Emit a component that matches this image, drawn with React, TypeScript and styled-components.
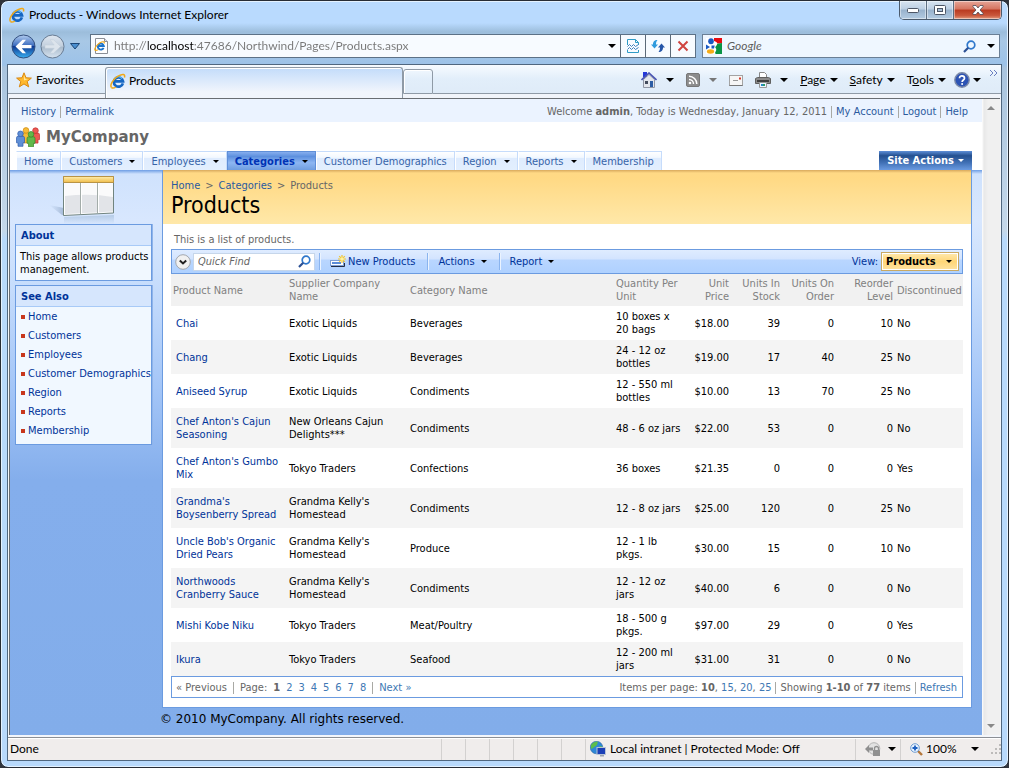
import React from "react";
import styled, { createGlobalStyle } from "styled-components";

const ui = `Lato, "Noto Sans", sans-serif`;
const tahoma = `"DejaVu Sans Condensed", "DejaVu Sans", sans-serif`;
const verdana = `"DejaVu Sans", sans-serif`;

const GlobalStyle = createGlobalStyle`
  * { box-sizing: border-box; }
  body { margin: 0; background: #30343c; font-family: ${tahoma}; font-size: 11px; line-height: 13px; color: #000; }
  button, input, select { font: inherit; color: inherit; margin: 0; padding: 0; border: 0; background: none; }
  a { text-decoration: none; color: inherit; }
  svg { display: block; flex: none; }
  h1, h2, p, ul { margin: 0; padding: 0; }
`;

/* ---------- browser frame ---------- */

const Shell = styled.div`
  min-height: 100vh;
  display: flex;
  flex-direction: column;
  padding: 0 6px 6px;
  border: 1px solid #272c35;
  border-radius: 8px;
  box-shadow: inset 0 0 0 1px #e4f2ff;
  background: linear-gradient(#b9dafe 0, #b9dafe 22px, #9cbddb 31px, #a8c8e6 40px, #9cc2e8 64px, #a9c4de 66px, #c5d8ea 230px, #b8d9fb 238px);
  font-family: ${ui};
  font-size: 12px;
  line-height: 16px;
`;

const TitleBar = styled.header`
  display: flex;
  align-items: flex-start;
  height: 33px;
`;

const WindowTitle = styled.div`
  flex: 1;
  display: flex;
  align-items: center;
  gap: 4px;
  padding: 6px 0 0 2px;
`;

const WindowButtons = styled.div`
  display: flex;
  height: 19px;
  border: 1px solid #4b5a6c;
  border-top: 0;
  border-radius: 0 0 5px 5px;
  overflow: hidden;
`;

const WindowButton = styled.button<{ $close?: boolean }>`
  width: ${p => (p.$close ? 47 : 27)}px;
  display: grid;
  place-items: center;
  border-right: ${p => (p.$close ? 0 : 1)}px solid #5d6e82;
  box-shadow: inset 0 0 0 1px rgba(255, 255, 255, 0.45);
  background: ${p =>
    p.$close
      ? "linear-gradient(#e6a597 0, #d5745f 45%, #b93a20 50%, #c9573b 80%, #e39a7c)"
      : "linear-gradient(#d8e4f1 0, #bccfe3 45%, #98b2cc 50%, #b3cbe2)"};
`;

const AddressRow = styled.div`
  display: flex;
  align-items: center;
  height: 24px;
  margin: 0 2px 6px 4px;
`;

const NavOrb = styled.button`
  display: grid;
  margin-right: 4px;
`;

const HistoryButton = styled.button`
  margin: 0 10px 0 1px;
`;

const AddressBox = styled.div`
  flex: 1;
  display: flex;
  align-items: center;
  height: 24px;
  padding-left: 3px;
  border: 1px solid #5c7186;
  background: #f7fbff;
`;

const UrlInput = styled.input`
  flex: 1;
  min-width: 0;
  margin-left: 5px;
  outline: 0;
  -webkit-text-fill-color: transparent;
  background: linear-gradient(90deg, #777 34px, #000 34px, #000 80px, #777 80px);
  -webkit-background-clip: text;
  background-clip: text;
`;

const BoxButton = styled.button<{ $line?: boolean; $narrow?: boolean }>`
  height: 22px;
  width: ${p => (p.$narrow ? 17 : 25)}px;
  display: grid;
  place-items: center;
  border-left: ${p => (p.$line ? 1 : 0)}px solid #5c6a78;
`;

const SearchBox = styled.div`
  width: 298px;
  height: 24px;
  margin-left: 6px;
  display: flex;
  align-items: center;
  padding-left: 3px;
  border: 1px solid #6a7f95;
  background: #eff7ff;
`;

const SearchInput = styled.input`
  flex: 1;
  min-width: 0;
  margin-left: 5px;
  outline: 0;
  font-style: italic;
  &::placeholder { color: #5c5c5c; opacity: 1; }
`;

const Client = styled.div`
  flex: 1;
  display: flex;
  flex-direction: column;
  border: 1px solid #50677f;
  background: #f3f6fb;
`;

const CommandRow = styled.div`
  display: flex;
  align-items: flex-start;
  height: 33px;
  padding-top: 2px;
  background: linear-gradient(#f7fbff 0, #e2eefa 14px, #dfebf8 28px, #f1f4fa 29px);
`;

const Favorites = styled.button`
  width: 97px;
  height: 27px;
  padding-left: 8px;
  display: flex;
  align-items: center;
  gap: 4px;
  border-bottom: 1px solid #8f9aa6;
`;

const BrowserTab = styled.a`
  width: 298px;
  height: 31px;
  padding: 0 0 4px 4px;
  display: flex;
  align-items: center;
  gap: 3px;
  border: 1px solid #8f9aa6;
  border-bottom: 0;
  border-radius: 3px 3px 0 0;
  box-shadow: inset 1px 1px 0 #fff;
  background: linear-gradient(#c3dcfa, #f1f5fc 80%);
`;

const NewTab = styled.button`
  width: 30px;
  height: 25px;
  margin-top: 2px;
  border: 1px solid #8f9aa6;
  border-radius: 3px 3px 0 0;
  box-shadow: inset 1px 1px 0 #fff;
`;

const Commands = styled.div`
  flex: 1;
  display: flex;
  align-items: center;
  justify-content: flex-end;
  height: 27px;
  padding-right: 3px;
  border-bottom: 1px solid #8f9aa6;
`;

const Command = styled.button<{ $icon?: boolean; $close?: boolean }>`
  display: flex;
  align-items: center;
  gap: ${p => (p.$icon ? 9 : p.$close ? 3 : 4)}px;
  margin-left: ${p => (p.$close ? 8 : 12)}px;
`;

const Viewport = styled.div`
  flex: 1;
  display: flex;
  margin: 0 1px 2px;
  border-top: 1px solid #696d72;
  border-left: 1px solid #696d72;
`;

const Scrollbar = styled.div`
  width: 18px;
  display: flex;
  flex-direction: column;
  justify-content: space-between;
  align-items: center;
  padding: 7px 0;
  background: linear-gradient(90deg, #fff 0, #e8e8e8 2px, #f0f0f0 6px, #f0f0f0);
`;

const StatusBar = styled.footer`
  display: flex;
  align-items: center;
  height: 23px;
  padding-left: 2px;
  border-top: 1px solid #8b8f95;
  box-shadow: inset 0 1px 0 #fff;
  background: #f0edec;
`;

const StatusText = styled.span`
  flex: 1;
`;

const StatusCell = styled.span<{ $w: number }>`
  width: ${p => p.$w}px;
  height: 21px;
  display: flex;
  align-items: center;
  gap: 4px;
  padding-left: 4px;
  border-left: 1px solid #d3d1d0;
  white-space: nowrap;
`;

const StatusMenu = styled.button<{ $w: number; $end?: number }>`
  width: ${p => p.$w}px;
  height: 21px;
  display: flex;
  align-items: center;
  gap: 3px;
  padding: 0 ${p => p.$end ?? 4}px 0 9px;
  border-left: 1px solid #d3d1d0;
  & > :last-child { margin-left: auto; }
`;

/* ---------- site ---------- */

const Site = styled.div`
  flex: 1;
  min-width: 0;
  display: flex;
  flex-direction: column;
  background: #fff;
  color: #666;
  font-family: ${tahoma};
  font-size: 11px;
  line-height: 13px;
`;

const TopLinks = styled.div`
  display: flex;
  justify-content: space-between;
  align-items: center;
  height: 23px;
  padding: 1px 14px 0 11px;
  background: #ebf3ff;
`;

const LinkRow = styled.div`
  display: flex;
  gap: 4px;
`;

const Bar = styled.span`
  width: 1px;
  height: 12px;
  margin-top: 1px;
  background: #a9a9a4;
`;

const SiteLink = styled.a`
  color: #2b5a9e;
`;

const Brand = styled.div`
  display: flex;
  align-items: center;
  gap: 6px;
  height: 29px;
  padding-left: 6px;
  font: bold 15px/20px ${verdana};
  color: #666;
`;

const MainNav = styled.nav`
  display: flex;
  height: 19px;
  padding: 0 10px 0 6px;
`;

const NavItem = styled.a<{ $active?: boolean }>`
  display: flex;
  align-items: center;
  gap: 7px;
  padding: 0 7px;
  border: 1px solid ${p => (p.$active ? "#5f8fd8" : "#c6dcfb")};
  border-bottom: 0;
  border-left-color: ${p => (p.$active ? "#5f8fd8" : "#fff")};
  white-space: nowrap;
  color: ${p => (p.$active ? "#0033b5" : "#3764a8")};
  font-weight: ${p => (p.$active ? "bold" : "normal")};
  background: ${p =>
    p.$active
      ? "linear-gradient(#86aeee, #5d90de 25%, #8db6f2 60%, #6f9de0)"
      : "linear-gradient(#fff, #f2f8ff 30%, #dfecfe 35%, #e3effe)"};
`;

const SiteActions = styled.button`
  margin-left: auto;
  display: flex;
  align-items: center;
  gap: 4px;
  padding: 0 8px;
  color: #fff;
  font-weight: bold;
  background: linear-gradient(#5e8fd8 0, #24508f 25%, #3f6fb4 60%, #6a9ae0);
`;

const Body = styled.div`
  flex: 1;
  display: grid;
  grid-template-columns: 152px minmax(0, 1fr);
  padding-right: 10px;
  align-content: start;
  background: linear-gradient(#6d9de4 0, #cfe2fd 4px, #d8e7fe 50px, #cbe0fd 100px, #a3c5f7 220px, #84aeec 310px, #82adea);
`;

const Sidebar = styled.aside`
  padding: 5px 10px 0 5px;
`;

const Artwork = styled.div`
  display: flex;
  justify-content: center;
  height: 49px;
  padding-right: 1px;
`;

const SideBox = styled.section`
  margin-bottom: 4px;
  border: 1px solid #6b9be0;
  box-shadow: 1px 0 0 #8fb4ea;
  background: #f1f8ff;
  color: #000;
`;

const SideTitle = styled.h2`
  padding: 4px 5px;
  height: 21px;
  font-size: 11px;
  line-height: 13px;
  color: #003399;
  border-bottom: 1px solid #a8caf7;
  background: #d6e6fd;
`;

const SideText = styled.p`
  padding: 4px 0 4px 4px;
`;

const SideList = styled.ul`
  list-style: none;
  padding: 0 0 4px 5px;
`;

const SideItem = styled.li`
  display: flex;
  align-items: center;
  gap: 3px;
  height: 19px;
  white-space: nowrap;
  color: #003399;
  &::before { content: ""; flex: none; width: 4px; height: 4px; background: #c8371c; }
`;

const Panel = styled.main`
  border: 1px solid #6b9be0;
  border-top: 0;
  background: #fff;
  padding-bottom: 9px;
`;

const Banner = styled.div`
  padding: 9px 8px 0;
  height: 54px;
  background: linear-gradient(#d8a95d 0, #ffd985 3px, #ffd984 8px, #ffe8a9);
`;

const Crumbs = styled.div`
  display: flex;
  gap: 5px;
`;

const PageTitle = styled.h1`
  color: #000;
  font-weight: normal;
  font-size: 23px;
  line-height: 26px;
`;

const Intro = styled.p`
  padding: 9px 11px 3px;
`;

const Grid = styled.div`
  margin: 0 8px;
`;

const Toolbar = styled.div`
  display: flex;
  align-items: center;
  height: 25px;
  padding: 0 3px;
  border: 1px solid #6b9be0;
  background: linear-gradient(#dfecff 0, #d3e4ff 9px, #b9d6ff 10px, #afd1ff);
  color: #003399;
`;

const QuickFind = styled.label`
  display: flex;
  align-items: center;
  width: 122px;
  height: 18px;
  margin: 0 4px 0 2px;
  padding: 0 3px 0 4px;
  border: 1px solid #c6d6ea;
  background: #fff;
`;

const QuickInput = styled.input`
  flex: 1;
  min-width: 0;
  outline: 0;
  font-style: italic;
  &::placeholder { color: #666; opacity: 1; }
`;

const ToolButton = styled.button<{ $icon?: boolean }>`
  display: flex;
  align-items: center;
  gap: ${p => (p.$icon ? 2 : 6)}px;
  height: 17px;
  padding: 0 12px 0 10px;
  border-left: 1px solid #8ab4ee;
  box-shadow: inset 1px 0 0 #eaf3ff;
  white-space: nowrap;
`;

const ViewPicker = styled.label`
  position: relative;
  display: flex;
  align-items: center;
  gap: 3px;
  margin-left: auto;
  white-space: nowrap;
`;

const ViewSelect = styled.select`
  width: 78px;
  height: 19px;
  padding-left: 4px;
  appearance: none;
  border: 1px solid #c9a962;
  box-shadow: inset 0 0 0 1px #fff;
  background: linear-gradient(#ffe9ae, #ffd677 50%, #ffe3a0);
  color: #000;
  font-weight: bold;
`;

const SelectCaret = styled.span`
  position: absolute;
  right: 7px;
  top: 8px;
  pointer-events: none;
`;

const Table = styled.table`
  width: 100%;
  table-layout: fixed;
  border-collapse: collapse;
  color: #000;
`;

const Head = styled.th<{ $right?: boolean }>`
  padding: 3px 2px;
  font-weight: normal;
  color: #808080;
  text-align: ${p => (p.$right ? "right" : "left")};
  white-space: pre;
  background: #f1f1f1;
`;

const Row = styled.tr`
  &:nth-child(even) { background: #f4f4f4; }
`;

const Cell = styled.td<{ $right?: boolean; $name?: boolean }>`
  padding: ${p => (p.$name ? "7px 5px" : "4px 2px")};
  text-align: ${p => (p.$right ? "right" : "left")};
  white-space: pre;
  color: ${p => (p.$name ? "#003399" : "#000")};
`;

const Pager = styled.div`
  display: flex;
  justify-content: space-between;
  align-items: center;
  height: 22px;
  padding: 0 5px 0 4px;
  border: 1px solid #6b9be0;
  white-space: pre;
`;

const Pages = styled.div`
  display: flex;
  gap: 6px;
`;

const PageLink = styled.a`
  color: #4078b4;
`;

const Copyright = styled.div`
  grid-column: 1 / -1;
  padding: 5px 0 8px 150px;
  font: 12px/13px ${verdana};
  color: #000;
`;

/* ---------- icons ---------- */

const Caret = ({ w = 6, color = "#000" }: { w?: number; color?: string }) => (
  <svg width={w} height={w / 2} viewBox="0 0 6 3"><path d="M0 0h6L3 3z" fill={color} /></svg>
);

const HistoryCaret = () => (
  <svg width="10" height="7" viewBox="0 0 10 7"><path d="M.5.5h9L5 6z" fill="#4a8fd0" stroke="#1b4676" /></svg>
);

const IeLogo = () => (
  <svg width="16" height="16" viewBox="0 0 16 16" fill="none">
    <path d="M12.9 10.3A4.6 4.6 0 1 1 13 8.3H4.6" stroke="#1666c2" strokeWidth="2.7" />
    <path d="M4.4 6.2A4.4 4.4 0 0 1 12 5.6" stroke="#58b8f4" strokeWidth="1.3" />
    <path d="M1.6 14.6C-.6 12.5 3 6 8 3.2s7.5-2 6.4 1.3" stroke="#f0a818" strokeWidth="1.5" />
    <path d="M1.6 14.6c1 .8 2.800.3 4.200-.5" stroke="#f0a818" strokeWidth="1.4" />
  </svg>
);

const BackOrb = () => (
  <svg width="25" height="25" viewBox="0 0 25 25">
    <defs>
      <linearGradient id="orb" x1="0" y1="0" x2="0" y2="1">
        <stop offset="0" stopColor="#b3cdf0" /><stop offset=".45" stopColor="#3f6fc0" />
        <stop offset=".5" stopColor="#0f3a92" /><stop offset="1" stopColor="#39b0f2" />
      </linearGradient>
    </defs>
    <circle cx="12.5" cy="12.5" r="11.5" fill="url(#orb)" stroke="#34507e" />
    <path d="M4.500 12.500l7-6.800h3.500L10.800 11H20.500v3.200h-9.700l4.200 5h-3.500z" fill="#fff" />
  </svg>
);

const ForwardOrb = () => (
  <svg width="25" height="25" viewBox="0 0 25 25">
    <defs>
      <linearGradient id="orb2" x1="0" y1="0" x2="0" y2="1">
        <stop offset="0" stopColor="#dfe7f0" /><stop offset=".48" stopColor="#c3d0de" /><stop offset=".52" stopColor="#a9bacb" /><stop offset="1" stopColor="#d8e4f0" />
      </linearGradient>
    </defs>
    <circle cx="12.5" cy="12.5" r="11.5" fill="url(#orb2)" stroke="#677b93" />
    <path d="M20.500 12.500l-7-6.800H10l4.200 5.300H5v3.200h9.200l-4.200 5h3.500z" fill="#dce4ec" stroke="#c3cfdb" strokeWidth=".5" />
  </svg>
);

const PageIe = () => (
  <svg width="15" height="16" viewBox="0 0 15 16">
    <path d="M1.500.5h9l3 3v12h-12z" fill="#fff" stroke="#8a8f96" /><path d="M10.500.5v3h3" fill="#dde" stroke="#8a8f96" />
    <path d="M9.600 9.800A3 3 0 1 1 9.800 8H3.500" fill="none" stroke="#1c74cc" strokeWidth="1.9" />
    <path d="M1 12C0 10.500 3 6.500 6 4.800s5-1.300 4 .7M1 12c.6.700 2 .2 3-.3" fill="none" stroke="#f0a818" strokeWidth="1.2" />
  </svg>
);

const BrokenPage = () => (
  <svg width="12" height="14" viewBox="0 0 12 14" fill="none" stroke="#2f9bc6">
    <path d="M.5 6V.5h8l3 3V6M8.500.5v3h3M.5 11v2.500h11V11" />
    <path d="M.5 7.500l2-2 2 2 2-2 2 2 3-2M.5 10.500l2-2 2 2 2-2 2 2 3-2" stroke="#3c7fbd" />
  </svg>
);

const Refresh = () => (
  <svg width="14" height="14" viewBox="0 0 14 14">
    <path d="M0 5.500L3.500 9.500 7 5.500H5c0-2 .4-3.300 1.500-4.500C3.200 1 2 3 2 5.500z" fill="#2f9bdd" />
    <path d="M14 8.500l-3.500-4L7 8.500h2c0 2-.4 3.300-1.500 4.500 3.300 0 4.500-2 4.500-4.500z" fill="#2556a8" />
  </svg>
);

const Stop = () => (
  <svg width="12" height="12" viewBox="0 0 12 12"><path d="M1.500 1.500l9 9M10.500 1.500l-9 9" stroke="#cf4440" strokeWidth="2" /></svg>
);

const GoogleMark = () => (
  <svg width="16" height="16" viewBox="0 0 16 16">
    <path d="M0 0h16v16H0z" fill="#fff" />
    <path d="M8 0h8v5.500h-4.500L8 3z" fill="#e60c10" /><path d="M10 6l6-1v11H9.500L8 10z" fill="#0a9445" />
    <path d="M8 3.500c3 0 4 2 2.500 4S9 9 10 10.500 9 15 7.500 16H6V3.500z" fill="#fff" />
    <ellipse cx="5" cy="3.3" rx="2.8" ry="3" fill="#1959c2" />
    <path d="M0 6.500l4 2.500-4 2.500z" fill="#1959c2" /><path d="M5.500 7.500h3.200l-.7 3H5.500z" fill="#1959c2" />
    <ellipse cx="4.5" cy="13.5" rx="3.6" ry="2.2" fill="#f5ac18" />
  </svg>
);

const Magnifier = () => (
  <svg width="13" height="13" viewBox="0 0 13 13" fill="none">
    <circle cx="8" cy="5" r="3.8" stroke="#2f78cc" strokeWidth="1.7" /><path d="M5.200 7.800L1 12" stroke="#2a4f94" strokeWidth="2.2" />
  </svg>
);

const Star = () => (
  <svg width="16" height="16" viewBox="0 0 16 16">
    <path d="M8 .8l2 5 5.400.3-4.200 3.400 1.500 5.400L8 11.900l-4.700 3 1.500-5.400L.6 6.100 6 5.800z" fill="#ffb92e" stroke="#d98812" />
    <path d="M8 3l1.200 3.800 3 .3L8 8.500z" fill="#ffe79a" />
  </svg>
);

const House = () => (
  <svg width="16" height="16" viewBox="0 0 16 16">
    <path d="M2 0h4v5H2z" fill="#2438d8" /><path d="M2.500 7.500L8 2.500l5.500 5v8h-11z" fill="#e3e6ec" stroke="#9096a4" />
    <path d="M.5 8L8 1l7.500 7" fill="none" stroke="#4a55b4" strokeWidth="1.6" />
    <path d="M4 9h3v3H4z" fill="#444c5c" /><path d="M9 9h3v6H9z" fill="#2c5ca4" />
  </svg>
);

const Feed = () => (
  <svg width="14" height="14" viewBox="0 0 14 14" fill="none">
    <rect x=".5" y=".5" width="13" height="13" rx="1.5" fill="#8c8c8c" stroke="#777" />
    <circle cx="4" cy="10" r="1.3" fill="#fff" />
    <path d="M3 6.500a4.500 4.500 0 0 1 4.500 4.500M3 3.200A7.800 7.800 0 0 1 10.800 11" stroke="#fff" strokeWidth="1.5" />
  </svg>
);

const Mail = () => (
  <svg width="14" height="11" viewBox="0 0 14 11">
    <rect x=".5" y=".5" width="13" height="10" fill="#f6f6f6" stroke="#a3a3a3" />
    <path d="M10 2.500h2v2h-2z" fill="#d63a2a" /><path d="M4 5.500h5" stroke="#999" /><path d="M.5 10.500h13" stroke="#777" />
  </svg>
);

const Printer = () => (
  <svg width="16" height="16" viewBox="0 0 16 16">
    <path d="M4.500.5h5l2 2V6h-7z" fill="#fff" stroke="#888" />
    <path d="M.5 6.500l2-1h11l2 1v5H.5z" fill="#8b8b8b" stroke="#606060" /><path d="M2 8h12v2H2z" fill="#3f3f3f" />
    <path d="M4.500 10.500h7v5h-7z" fill="#eef6ff" stroke="#999" /><path d="M6 12h2v2H6z" fill="#2489c9" /><path d="M8 12h2v2H8z" fill="#2a9c68" />
  </svg>
);

const HelpIcon = () => (
  <svg width="16" height="16" viewBox="0 0 16 16" fill="none">
    <circle cx="8" cy="8" r="7.2" fill="#2c53b4" stroke="#7c8aa8" strokeWidth="1.4" />
    <path d="M5.500 6.200c0-3.200 5-3 5 0 0 1.800-2.400 1.800-2.400 3.800" stroke="#fff" strokeWidth="1.7" /><circle cx="8.1" cy="12" r="1" fill="#fff" />
  </svg>
);

const Minimize = () => (
  <svg width="12" height="5" viewBox="0 0 12 5"><rect x=".5" y=".5" width="11" height="4" rx="1" fill="#fff" stroke="#4d5666" /></svg>
);
const Maximize = () => (
  <svg width="12" height="10" viewBox="0 0 12 10"><rect x=".5" y=".5" width="11" height="9" rx="1" fill="#fff" stroke="#4d5666" /><rect x="3.5" y="3.5" width="5" height="3" fill="#a9bfd6" stroke="#4d5666" /></svg>
);
const CloseX = () => (
  <svg width="12" height="10" viewBox="0 0 12 10"><path d="M1 .5h3l2 2.500L8 .5h3v1.200L8 5l3 3.300v1.200H8L6 7 4 9.500H1V8.300L4 5 1 1.700z" fill="#fff" stroke="#4f4a55" strokeWidth=".8" /></svg>
);

const person = (x: number, y: number, fill: string, dark: string) => (
  <g key={fill} fill={fill} stroke={dark} strokeWidth=".7">
    <path d={`M${x} ${y + 7}q0-1.500 1.500-1.500h5q1.500 0 1.500 1.500v5h-1.500v3.500h-5v-3.500H${x}z`} />
    <circle cx={x + 4} cy={y + 3} r="2.8" />
  </g>
);
const People = () => (
  <svg width="24" height="20" viewBox="0 0 24 20">
    {person(6, 0.4, "#f6bb36", "#cf8a10")}
    {person(15.5, 0.6, "#ec5852", "#c22f30")}
    {person(0.5, 3.8, "#5f8fd6", "#2f5cae")}
    {person(11, 4.3, "#63b84a", "#348828")}
  </svg>
);

const GridArt = () => (
  <svg width="68" height="49" viewBox="0 0 68 49">
    <defs>
      <linearGradient id="gold" x1="0" y1="0" x2="0" y2="1"><stop offset="0" stopColor="#ffefae" /><stop offset="1" stopColor="#efbb48" /></linearGradient>
      <linearGradient id="fade" x1="0" y1="0" x2="0" y2="1"><stop offset="0" stopColor="#b5cbe6" /><stop offset="1" stopColor="#b5cbe6" stopOpacity="0" /></linearGradient>
      <linearGradient id="slant" x1="0" y1="0" x2="1" y2="0"><stop offset="0" stopColor="#b3c8e4" stopOpacity="0" /><stop offset="1" stopColor="#a3b8d6" /></linearGradient>
    </defs>
    <path d="M0 30l15 3v7H13z" fill="url(#slant)" />
    <path d="M15 42l50-2v9H15z" fill="url(#fade)" />
    <path d="M14.500 1.500h50V38l-50 2.500z" fill="#fafafb" stroke="#71847f" />
    <path d="M16 21q25-3 48 1v14.500L16 39z" fill="#e2e4e8" />
    <path d="M14.500 1.500h50v6h-50z" fill="url(#gold)" stroke="#b99344" />
    <path d="M31.500 8v31M48.500 8v30" stroke="#a3aca9" /><path d="M32.500 8v31M49.500 8v30M15.500 8v31.500" stroke="#fff" />
  </svg>
);

const Chevron = () => (
  <svg width="16" height="16" viewBox="0 0 16 16" fill="none">
    <circle cx="8" cy="8" r="7.3" fill="#f1f1f1" stroke="#a3a7ad" /><path d="M4.800 6.500L8 9.500l3.200-3" stroke="#222" strokeWidth="2" />
  </svg>
);

const NewRecord = () => (
  <svg width="16" height="13" viewBox="0 0 16 13">
    <rect x=".5" y="5.5" width="13" height="5" fill="#fff" stroke="#7f9fd4" /><path d="M2 7h9v2H2z" fill="#5c8cd8" /><path d="M1 11.500h13.500V8" stroke="#222c44" fill="none" />
    <path d="M12 0v8M8 4h8M9.200 1.200l5.600 5.600M14.800 1.200L9.200 6.800" stroke="#f4c52a" strokeWidth="1.2" /><circle cx="12" cy="4" r="1.8" fill="#fff2a0" />
  </svg>
);

const Globe = () => (
  <svg width="16" height="16" viewBox="0 0 16 16">
    <circle cx="6.5" cy="6.5" r="6.3" fill="#2f87d6" stroke="#2a5f95" strokeWidth=".5" />
    <path d="M1 4c3-4 6-3 7-3.500L7 4 3 7 1 8zM7 8l3-3 3 1-3 6-3 0z" fill="#5ebd4a" />
    <rect x="7" y="6.5" width="8.5" height="7" fill="#1b3fb6" stroke="#b9c4d4" /><path d="M10 14h4v1.500h-4z" fill="#9aa3b0" />
  </svg>
);

const PrivacyIcon = () => (
  <svg width="16" height="15" viewBox="0 0 16 15" fill="none">
    <circle cx="9" cy="6.5" r="5.8" fill="#e2e2e2" stroke="#b4b4b4" /><path d="M0 7l4-4v2.500h4v3H4V11z" fill="#8f8f8f" />
    <rect x="8" y="8" width="7" height="6" fill="#909090" /><path d="M9.500 8V6.500a2 2 0 0 1 4 0V8" stroke="#909090" strokeWidth="1.3" />
  </svg>
);

const ZoomIcon = () => (
  <svg width="13" height="13" viewBox="0 0 13 13" fill="none">
    <path d="M8 8l4 4" stroke="#b4763a" strokeWidth="2.4" /><circle cx="5" cy="5" r="4.3" fill="#e9f4ff" stroke="#6f9cd0" /><path d="M5 2.500v5M2.500 5h5" stroke="#1d60c0" strokeWidth="1.8" />
  </svg>
);

const Grip = () => (
  <svg width="10" height="10" viewBox="0 0 10 10" fill="#bdbbba"><path d="M8 0h2v2H8zM4 4h2v2H4zM8 4h2v2H8zM0 8h2v2H0zM4 8h2v2H4zM8 8h2v2H8z" /></svg>
);

/* ---------- data ---------- */

const navItems = [
  { label: "Home" }, { label: "Customers", menu: true }, { label: "Employees", menu: true },
  { label: "Categories", menu: true, active: true }, { label: "Customer Demographics" },
  { label: "Region", menu: true }, { label: "Reports", menu: true }, { label: "Membership" },
];

const seeAlso = ["Home", "Customers", "Employees", "Customer Demographics", "Region", "Reports", "Membership"];

const columns = [
  { label: "Product Name", w: 116 }, { label: "Supplier Company\nName", w: 121 }, { label: "Category Name" },
  { label: "Quantity Per\nUnit", w: 71 }, { label: "Unit\nPrice", w: 46, right: true }, { label: "Units In\nStock", w: 51, right: true },
  { label: "Units On\nOrder", w: 54, right: true }, { label: "Reorder\nLevel", w: 59, right: true }, { label: "Discontinued", w: 68 },
];

const rows: string[][] = [
  ["Chai", "Exotic Liquids", "Beverages", "10 boxes x\n20 bags", "$18.00", "39", "0", "10", "No"],
  ["Chang", "Exotic Liquids", "Beverages", "24 - 12 oz\nbottles", "$19.00", "17", "40", "25", "No"],
  ["Aniseed Syrup", "Exotic Liquids", "Condiments", "12 - 550 ml\nbottles", "$10.00", "13", "70", "25", "No"],
  ["Chef Anton's Cajun\nSeasoning", "New Orleans Cajun\nDelights***", "Condiments", "48 - 6 oz jars", "$22.00", "53", "0", "0", "No"],
  ["Chef Anton's Gumbo\nMix", "Tokyo Traders", "Confections", "36 boxes", "$21.35", "0", "0", "0", "Yes"],
  ["Grandma's\nBoysenberry Spread", "Grandma Kelly's\nHomestead", "Condiments", "12 - 8 oz jars", "$25.00", "120", "0", "25", "No"],
  ["Uncle Bob's Organic\nDried Pears", "Grandma Kelly's\nHomestead", "Produce", "12 - 1 lb\npkgs.", "$30.00", "15", "0", "10", "No"],
  ["Northwoods\nCranberry Sauce", "Grandma Kelly's\nHomestead", "Condiments", "12 - 12 oz\njars", "$40.00", "6", "0", "0", "No"],
  ["Mishi Kobe Niku", "Tokyo Traders", "Meat/Poultry", "18 - 500 g\npkgs.", "$97.00", "29", "0", "0", "Yes"],
  ["Ikura", "Tokyo Traders", "Seafood", "12 - 200 ml\njars", "$31.00", "31", "0", "0", "No"],
];

export default function App() {
  return (
    <>
      <GlobalStyle />
      <Shell>
        <TitleBar>
          <WindowTitle><IeLogo />Products - Windows Internet Explorer</WindowTitle>
          <WindowButtons>
            <WindowButton aria-label="Minimize"><Minimize /></WindowButton>
            <WindowButton aria-label="Maximize"><Maximize /></WindowButton>
            <WindowButton $close aria-label="Close"><CloseX /></WindowButton>
          </WindowButtons>
        </TitleBar>

        <AddressRow>
          <NavOrb aria-label="Back"><BackOrb /></NavOrb>
          <NavOrb aria-label="Forward"><ForwardOrb /></NavOrb>
          <HistoryButton aria-label="Recent pages"><HistoryCaret /></HistoryButton>
          <AddressBox>
            <PageIe />
            <UrlInput aria-label="Address" defaultValue="http://localhost:47686/Northwind/Pages/Products.aspx" />
            <BoxButton $narrow aria-label="Show addresses"><Caret w={8} /></BoxButton>
            <BoxButton $line aria-label="Compatibility view"><BrokenPage /></BoxButton>
            <BoxButton $line aria-label="Refresh"><Refresh /></BoxButton>
            <BoxButton $line aria-label="Stop"><Stop /></BoxButton>
          </AddressBox>
          <SearchBox>
            <GoogleMark />
            <SearchInput aria-label="Search" placeholder="Google" />
            <BoxButton aria-label="Search the web"><Magnifier /></BoxButton>
            <BoxButton $narrow aria-label="Search options"><Caret w={8} /></BoxButton>
          </SearchBox>
        </AddressRow>

        <Client>
          <CommandRow>
            <Favorites><Star />Favorites</Favorites>
            <BrowserTab href="#"><IeLogo />Products</BrowserTab>
            <NewTab aria-label="New tab" />
            <Commands>
              <Command $icon aria-label="Home page"><House /><Caret w={8} /></Command>
              <Command $icon aria-label="Feeds"><Feed /><Caret w={8} color="#777" /></Command>
              <Command aria-label="Mail"><Mail /></Command>
              <Command $icon aria-label="Print"><Printer /><Caret w={8} /></Command>
              <Command><span><u>P</u>age</span><Caret w={8} /></Command>
              <Command><span><u>S</u>afety</span><Caret w={8} /></Command>
              <Command><span>T<u>o</u>ols</span><Caret w={8} /></Command>
              <Command $close aria-label="Help"><HelpIcon /><Caret w={8} /></Command>
              <Command $close aria-label="More commands">
                <svg width="9" height="22" viewBox="0 0 9 22" fill="none" stroke="#6a7fc0"><path d="M1 1l3 3-3 3M5 1l3 3-3 3" /></svg>
              </Command>
            </Commands>
          </CommandRow>

          <Viewport>
            <Site>
              <TopLinks>
                <LinkRow><SiteLink href="#">History</SiteLink><Bar /><SiteLink href="#">Permalink</SiteLink></LinkRow>
                <LinkRow>
                  <span>Welcome <b>admin</b>, Today is Wednesday, January 12, 2011</span>
                  <Bar /><SiteLink href="#">My Account</SiteLink>
                  <Bar /><SiteLink href="#">Logout</SiteLink>
                  <Bar /><SiteLink href="#">Help</SiteLink>
                </LinkRow>
              </TopLinks>
              <Brand><People />MyCompany</Brand>
              <MainNav>
                {navItems.map(n => (
                  <NavItem key={n.label} href="#" $active={n.active}>{n.label}{n.menu && <Caret />}</NavItem>
                ))}
                <SiteActions>Site Actions<Caret color="#fff" /></SiteActions>
              </MainNav>

              <Body>
                <Sidebar>
                  <Artwork><GridArt /></Artwork>
                  <SideBox>
                    <SideTitle>About</SideTitle>
                    <SideText>This page allows products management.</SideText>
                  </SideBox>
                  <SideBox>
                    <SideTitle>See Also</SideTitle>
                    <SideList>
                      {seeAlso.map(s => <SideItem key={s}><a href="#">{s}</a></SideItem>)}
                    </SideList>
                  </SideBox>
                </Sidebar>

                <Panel>
                  <Banner>
                    <Crumbs>
                      <SiteLink href="#">Home</SiteLink><span>&gt;</span>
                      <SiteLink href="#">Categories</SiteLink><span>&gt;</span><span>Products</span>
                    </Crumbs>
                    <PageTitle>Products</PageTitle>
                  </Banner>
                  <Intro>This is a list of products.</Intro>
                  <Grid>
                    <Toolbar>
                      <button aria-label="Search options"><Chevron /></button>
                      <QuickFind><QuickInput aria-label="Quick Find" placeholder="Quick Find" /><Magnifier /></QuickFind>
                      <ToolButton $icon><NewRecord />New Products</ToolButton>
                      <ToolButton>Actions<Caret /></ToolButton>
                      <ToolButton>Report<Caret /></ToolButton>
                      <ViewPicker>
                        View:
                        <ViewSelect><option>Products</option></ViewSelect>
                        <SelectCaret><Caret /></SelectCaret>
                      </ViewPicker>
                    </Toolbar>
                    <Table>
                      <colgroup>{columns.map(c => <col key={c.label} width={c.w} />)}</colgroup>
                      <thead>
                        <tr>{columns.map(c => <Head key={c.label} $right={c.right}>{c.label}</Head>)}</tr>
                      </thead>
                      <tbody>
                        {rows.map(r => (
                          <Row key={r[0]}>
                            {r.map((v, i) => (
                              <Cell key={i} $right={columns[i].right} $name={i === 0}>{i === 0 ? <a href="#">{v}</a> : v}</Cell>
                            ))}
                          </Row>
                        ))}
                      </tbody>
                    </Table>
                    <Pager>
                      <Pages>
                        <span>« Previous</span><Bar /><span>Page:</span><b>1</b>
                        {[2, 3, 4, 5, 6, 7, 8].map(n => <PageLink key={n} href="#">{n}</PageLink>)}
                        <Bar /><PageLink href="#">Next »</PageLink>
                      </Pages>
                      <LinkRow>
                        <span>Items per page: <b>10</b>, <PageLink href="#">15</PageLink>, <PageLink href="#">20</PageLink>, <PageLink href="#">25</PageLink></span>
                        <Bar /><span>Showing <b>1-10</b> of <b>77</b> items</span>
                        <Bar /><PageLink href="#">Refresh</PageLink>
                      </LinkRow>
                    </Pager>
                  </Grid>
                </Panel>
                <Copyright>© 2010 MyCompany. All rights reserved.</Copyright>
              </Body>
            </Site>
            <Scrollbar>
              <svg width="8" height="4" viewBox="0 0 8 4"><path d="M0 4l4-4 4 4z" fill="#888" /></svg>
              <svg width="8" height="4" viewBox="0 0 8 4"><path d="M0 0h8L4 4z" fill="#888" /></svg>
            </Scrollbar>
          </Viewport>

          <StatusBar>
            <StatusText>Done</StatusText>
            {[1, 2, 3, 4, 5, 6].map(n => <StatusCell key={n} $w={24} />)}
            <StatusCell $w={270}><Globe />Local intranet | Protected Mode: Off</StatusCell>
            <StatusMenu $w={45} aria-label="Privacy report"><PrivacyIcon /><Caret w={8} /></StatusMenu>
            <StatusMenu $w={91} $end={12}><ZoomIcon />100%<Caret w={8} /></StatusMenu>
            <Grip />
          </StatusBar>
        </Client>
      </Shell>
    </>
  );
}
